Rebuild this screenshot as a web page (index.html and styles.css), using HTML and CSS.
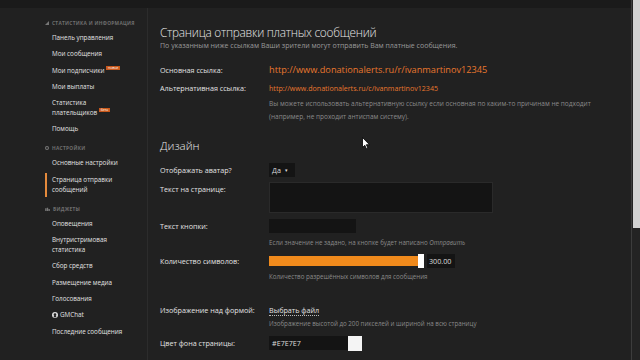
FILE: index.html
```html
<!DOCTYPE html>
<html lang="ru">
<head>
  <meta charset="UTF-8" />
  <title>Страница отправки платных сообщений</title>
  <link rel="stylesheet" href="styles.css">
</head>
<body>
  <div class="topbar"></div>
  <div class="layout">
    <div class="sidebar">
      <div class="group-title">
        <svg width="4" height="4" viewBox="0 0 6 6"><path d="M0 6h6V0z" fill="#777"/></svg>
        Статистика и информация
      </div>
      <a class="item">Панель управления</a>
      <a class="item">Мои сообщения</a>
      <a class="item">Мои подписчики<span class="badge">новое</span></a>
      <a class="item">Мои выплаты</a>
      <a class="item">Статистика<br>плательщиков<span class="badge">бета</span></a>
      <a class="item">Помощь</a>

      <div class="group-title">
        <svg width="4" height="4" viewBox="0 0 6 6"><circle cx="3" cy="3" r="2.2" fill="none" stroke="#777" stroke-width="1.6"/></svg>
        Настройки
      </div>
      <a class="item">Основные настройки</a>
      <a class="item active">Страница отправки<br>сообщений</a>

      <div class="group-title">
        <svg width="5" height="4" viewBox="0 0 7 6"><path d="M0 2h2v4H0zM2.5 1h2v5h-2zM5 3h2v3H5z" fill="#777"/></svg>
        Виджеты
      </div>
      <a class="item">Оповещения</a>
      <a class="item">Внутристримовая<br>статистика</a>
      <a class="item">Сбор средств</a>
      <a class="item">Размещение медиа</a>
      <a class="item">Голосования</a>
      <a class="item"><svg class="gm" width="6" height="6" viewBox="0 0 8 8"><circle cx="4" cy="4" r="4" fill="#ddd"/><circle cx="4" cy="3.6" r="1.8" fill="#222"/><path d="M2 7l1-2h2l1 2z" fill="#222"/></svg>GMChat</a>
      <a class="item">Последние сообщения</a>
    </div>

    <div class="main">
      <h1>Страница отправки платных сообщений</h1>
      <p class="lead">По указанным ниже ссылкам Ваши зрители могут отправить Вам платные сообщения.</p>

      <div class="row links">
        <div class="label">Основная ссылка:</div>
        <div class="field"><a class="link big">http://www.donationalerts.ru/r/ivanmartinov12345</a></div>
      </div>
      <div class="row links alt">
        <div class="label">Альтернативная ссылка:</div>
        <div class="field">
          <a class="link">http://www.donationalerts.ru/c/ivanmartinov12345</a>
          <p class="hint note">Вы можете использовать альтернативную ссылку если основная по каким-то причинам не подходит<br>(например, не проходит антиспам систему).</p>
        </div>
      </div>

      <h2>Дизайн</h2>

      <div class="row avatar">
        <div class="label">Отображать аватар?</div>
        <div class="field"><div class="select">Да <span class="caret">▾</span></div></div>
      </div>
      <div class="row page-text">
        <div class="label">Текст на странице:</div>
        <div class="field"><div class="textarea"></div></div>
      </div>
      <div class="row button-text">
        <div class="label">Текст кнопки:</div>
        <div class="field">
          <div class="input short"></div>
          <p class="hint">Если значение не задано, на кнопке будет написано <i>Отправить</i></p>
        </div>
      </div>
      <div class="row chars">
        <div class="label">Количество символов:</div>
        <div class="field">
          <div class="slider-line">
            <div class="slider"><div class="thumb"></div></div>
            <div class="value">300.00</div>
          </div>
          <p class="hint">Количество разрешённых символов для сообщения</p>
        </div>
      </div>
      <div class="row file">
        <div class="label">Изображение над формой:</div>
        <div class="field">
          <a class="choose">Выбрать файл</a>
          <p class="hint">Изображение высотой до 200 пикселей и шириной на всю страницу</p>
        </div>
      </div>
      <div class="row bg-color">
        <div class="label">Цвет фона страницы:</div>
        <div class="field">
          <div class="color-line"><div class="input color">#E7E7E7</div><div class="swatch"></div></div>
        </div>
      </div>
    </div>
  </div>

  <div class="scrollbar"><div class="thumb-bar"></div></div>
  <svg class="cursor" width="8" height="12" viewBox="0 0 8 12"><path d="M0.5 0.5v10l2.3-2.2 1.6 3.4 1.5-0.7-1.6-3.3h3.2z" fill="#fff" stroke="#000" stroke-width="0.8"/></svg>
</body>
</html>
```

FILE: styles.css
```css
html, body {
  margin: 0;
  height: 100%;
  overflow: hidden;
}
body {
  font-family: 'Open Sans', 'Noto Sans', sans-serif;
  background: #212121;
  color: #ddd;
}
.topbar {
  height: 8px;
  background: #1a1a1a;
}
.layout {
  display: flex;
  height: 352px;
  padding-right: 8px;
}

/* sidebar */
.sidebar {
  width: 148px;
  flex: none;
  border-right: 1px solid #2c2c2c;
  padding-top: 11px;
  box-sizing: border-box;
}
.group-title {
  display: flex;
  align-items: center;
  gap: 3px;
  height: 8px;
  padding-left: 45px;
  font-size: 4.8px;
  font-weight: bold;
  letter-spacing: 0.3px;
  text-transform: uppercase;
  color: #6f6f6f;
  margin: 0 0 3px;
}
.item {
  display: block;
  position: relative;
  padding: 3px 0 3px 52px;
  font-size: 6.3px;
  line-height: 10px;
  color: #e2e2e2;
  margin-bottom: 0.3px;
}
.item + .group-title {
  margin-top: 7px;
}
.item.active::before {
  content: "";
  position: absolute;
  left: 45px;
  top: 1px;
  bottom: 1px;
  width: 2px;
  background: #e48a3c;
}
.badge {
  display: inline-block;
  vertical-align: 4px;
  margin-left: 2px;
  padding: 0 1.5px;
  font-size: 3.5px;
  line-height: 4px;
  background: #c9581b;
  color: #fff;
}
.gm {
  vertical-align: -1px;
  margin-right: 2px;
}

/* main */
.main {
  flex: 1;
  min-width: 0;
  padding: 15px 0 0 12px;
}
h1 {
  margin: 0;
  font-size: 11.8px;
  letter-spacing: -0.25px;
  font-weight: 300;
  color: #e6e6e6;
  line-height: 18px;
}
.lead {
  margin: 0 0 12px;
  font-size: 7px;
  line-height: 10px;
  color: #9a9a9a;
}
.row {
  display: flex;
  align-items: flex-start;
}
.label {
  width: 109px;
  flex: none;
  font-size: 7.2px;
  line-height: 14px;
  color: #e2e2e2;
}
.field {
  flex: 1;
  font-size: 7.2px;
  line-height: 14px;
}
.link {
  display: block;
  color: #e8772e;
  line-height: 14px;
}
.link.big {
  font-size: 9.2px;
}
.alt {
  margin-top: 4px;
}
.alt .link {
  font-size: 7.1px;
}
.hint {
  margin: 5px 0 0;
  font-size: 6.2px;
  color: #8a8a8a;
  line-height: 10px;
}
.hint.note {
  font-size: 6.5px;
  line-height: 13px;
  margin-top: 1.5px;
}
h2 {
  margin: 14.5px 0 0;
  font-size: 11.5px;
  line-height: 18px;
  font-weight: 300;
  color: #e6e6e6;
}
.avatar { margin-top: 8px; }
.page-text { margin-top: 5px; }
.button-text { margin-top: 6px; }
.chars { margin-top: 6px; }
.chars .hint { margin-top: 4px; }
.file { margin-top: 21px; }
.file .hint { margin-top: 2px; }
.bg-color { margin-top: 7px; }

.select {
  box-sizing: border-box;
  width: 26px;
  height: 14px;
  background: #141414;
  padding: 0 3px;
}
.caret {
  font-size: 5px;
  margin-left: 2px;
  vertical-align: 1px;
}
.textarea {
  width: 224px;
  height: 31px;
  background: #141414;
  border: 1px solid #2a2a2a;
  box-sizing: border-box;
}
.input {
  background: #141414;
  height: 14px;
  box-sizing: border-box;
  padding-left: 3px;
}
.input.short {
  width: 87px;
}
.slider-line, .color-line {
  display: flex;
  align-items: center;
  height: 14px;
}
.slider {
  position: relative;
  width: 149px;
  height: 10px;
  background: #f08a1c;
}
.thumb {
  position: absolute;
  right: -6px;
  top: -2px;
  width: 6px;
  height: 14px;
  background: #fff;
}
.value {
  margin-left: 9px;
  width: 28px;
  box-sizing: border-box;
  background: #141414;
  padding: 0 2px;
}
.choose {
  color: #e2e2e2;
  border-bottom: 1px dotted #bbb;
}
.input.color {
  width: 79px;
}
.swatch {
  width: 14px;
  height: 15px;
  background: #f4f4f4;
}

/* browser scrollbar drawn over the right edge */
.scrollbar {
  position: fixed;
  top: 0;
  right: 0;
  width: 9px;
  height: 360px;
  background: #232323;
  border-left: 1px solid #3c3c3c;
  box-sizing: border-box;
}
.thumb-bar {
  margin-left: 1px;
  height: 228px;
  background: #d2d2d2;
}
.cursor {
  position: absolute;
  left: 362px;
  top: 137px;
}
```
